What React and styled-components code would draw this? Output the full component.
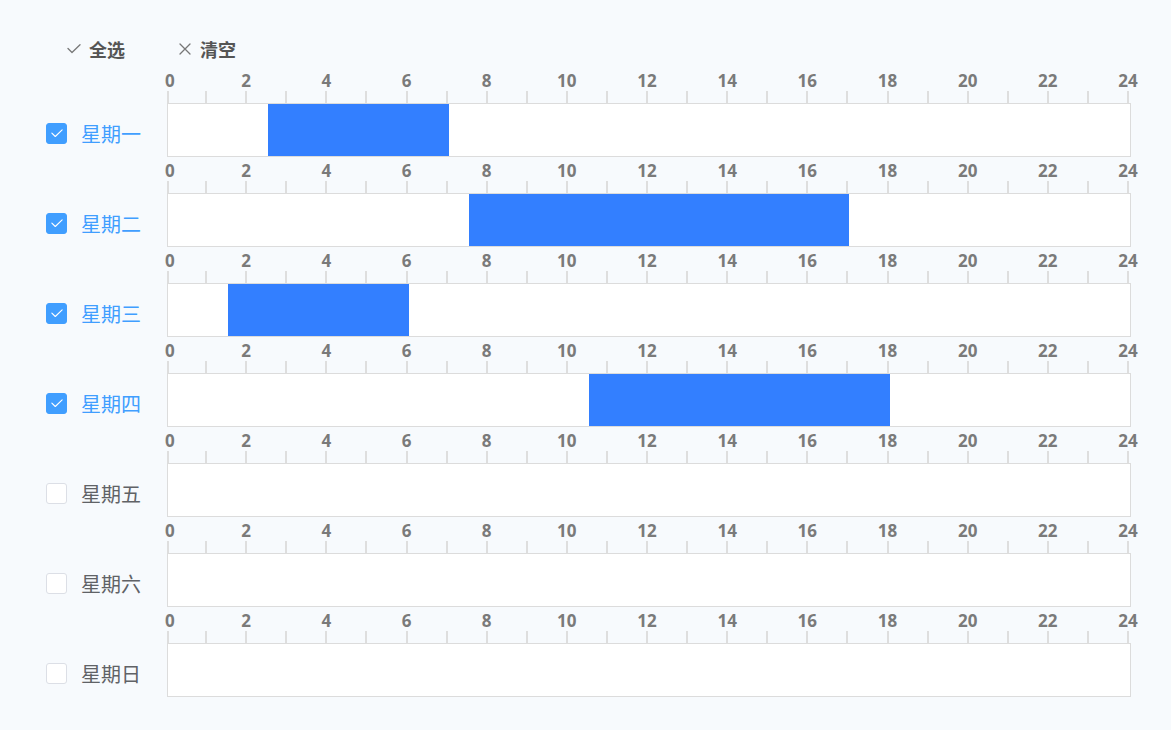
import React from 'react';
import styled, {createGlobalStyle} from 'styled-components';

const GlobalStyle = createGlobalStyle`
  html, body {
    margin: 0;
    padding: 0;
    background: #f7fafd;
  }
  body {
    font-family: "Open Sans", "Noto Sans CJK SC", sans-serif;
  }
`;

const Page = styled.div`
  width: 1171px;
  height: 730px;
  box-sizing: border-box;
  padding: 37px 40px 0 46px;
  background: #f7fafd;
`;

const Toolbar = styled.div`
  display: flex;
  align-items: center;
  gap: 54px;
  height: 24px;
  padding-left: 21px;
  margin-bottom: 6px;
`;

const ToolButton = styled.button`
  display: flex;
  align-items: center;
  gap: ${p => p.$gap || '8px'};
  padding: 0;
  border: none;
  background: none;
  color: #555;
  font-family: "Noto Sans CJK SC", sans-serif;
  font-size: 18px;
  font-weight: 700;
  cursor: pointer;

  svg {
    color: #777;
  }
`;

const DayRow = styled.div`
  display: grid;
  grid-template-columns: 121px 964px;
  grid-template-rows: 36px 54px;
`;

const Ruler = styled.div`
  grid-column: 2;
  grid-row: 1;
  position: relative;
  margin-left: -1px;
  width: 962px;
`;

const HourLabel = styled.span`
  position: absolute;
  top: 3px;
  left: ${p => p.$pos}%;
  transform: translateX(${p => (p.$first ? '0' : '-50%')});
  margin-left: ${p => (p.$first ? '-1px' : '0')};
  font-family: "Open Sans", sans-serif;
  font-size: 17px;
  font-weight: 700;
  line-height: 22px;
  color: #7a7a7a;
`;

const Tick = styled.span`
  position: absolute;
  bottom: 0;
  left: ${p => p.$pos}%;
  margin-left: ${p => (p.$first ? '1px' : '-1px')};
  width: 2px;
  height: 12px;
  background: #dedede;
`;

const DayLabel = styled.label`
  grid-column: 1;
  grid-row: 2;
  display: flex;
  align-items: center;
  gap: 14px;
  padding-top: 6px;
  font-family: "Noto Sans CJK SC", sans-serif;
  font-size: 20px;
  color: ${p => (p.$checked ? '#409eff' : '#606266')};
  cursor: pointer;
`;

const Box = styled.span`
  display: flex;
  align-items: center;
  justify-content: center;
  width: 21px;
  height: 21px;
  box-sizing: border-box;
  border: 1px solid ${p => (p.$checked ? '#409eff' : '#dcdfe6')};
  border-radius: 3px;
  background: ${p => (p.$checked ? '#409eff' : '#fff')};
  color: #fff;
`;

const Track = styled.div`
  grid-column: 2;
  grid-row: 2;
  position: relative;
  box-sizing: border-box;
  border: 1px solid #dcdcdc;
  background: #fff;
`;

const Bar = styled.div`
  position: absolute;
  top: 0;
  bottom: 0;
  left: ${p => (p.$start / 24) * 100}%;
  width: ${p => ((p.$end - p.$start) / 24) * 100}%;
  background: #337fff;
`;

const CheckIcon = ({width = 14, height = 10}) =>
  <svg width={width} height={height} viewBox="0 0 14 10" fill="none">
    <polyline
      points="1,4.5 5,8.5 13,0.8"
      stroke="currentColor"
      strokeWidth="1.3"
      strokeLinecap="round"
      strokeLinejoin="round"
    />
  </svg>

const CrossIcon = () =>
  <svg width="12" height="12" viewBox="0 0 12 12" fill="none">
    <path
      d="M1 1 L11 11 M11 1 L1 11"
      stroke="currentColor"
      strokeWidth="1.3"
      strokeLinecap="round"
    />
  </svg>

const days = [
  {name: '星期一', checked: true, ranges: [[2.5, 7]]},
  {name: '星期二', checked: true, ranges: [[7.5, 17]]},
  {name: '星期三', checked: true, ranges: [[1.5, 6]]},
  {name: '星期四', checked: true, ranges: [[10.5, 18]]},
  {name: '星期五', checked: false, ranges: []},
  {name: '星期六', checked: false, ranges: []},
  {name: '星期日', checked: false, ranges: []}
];

const hours = Array.from({length: 25}, (_, i) => i);

const Scale = () =>
  <Ruler>
    {hours.filter(h => h % 2 === 0).map(h =>
      <HourLabel key={'l' + h} $pos={(h / 24) * 100} $first={h === 0}>
        {h}
      </HourLabel>
    )}
    {hours.map(h =>
      <Tick key={'t' + h} $pos={(h / 24) * 100} $first={h === 0} />
    )}
  </Ruler>

export default function App() {
  return (
    <Page>
      <GlobalStyle />
      <Toolbar>
        <ToolButton>
          <CheckIcon />全选
        </ToolButton>
        <ToolButton $gap="9px">
          <CrossIcon />清空
        </ToolButton>
      </Toolbar>
      {days.map(day =>
        <DayRow key={day.name}>
          <Scale />
          <DayLabel $checked={day.checked}>
            <Box $checked={day.checked}>
              {day.checked && <CheckIcon width={12} height={9} />}
            </Box>
            {day.name}
          </DayLabel>
          <Track>
            {day.ranges.map(([start, end]) =>
              <Bar key={start} $start={start} $end={end} />
            )}
          </Track>
        </DayRow>
      )}
    </Page>
  );
}
